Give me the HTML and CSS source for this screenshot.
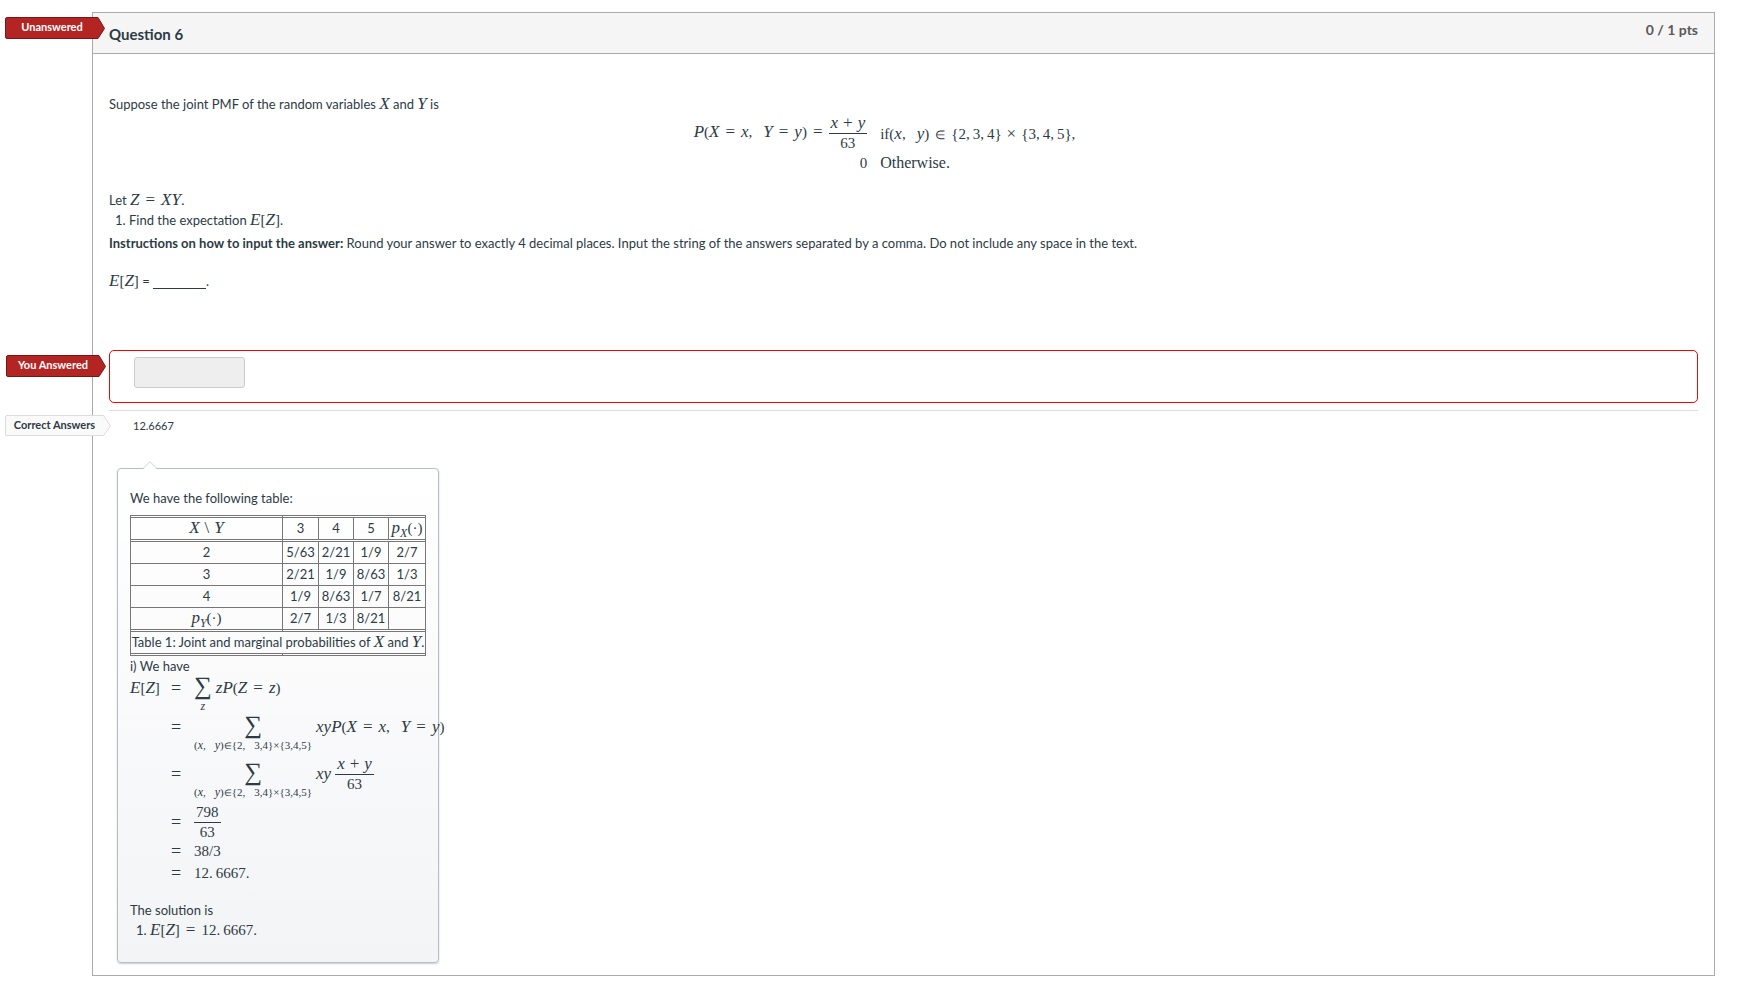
FILE: index.html
```html
<!DOCTYPE html>
<html lang="en">
<head>
<meta charset="utf-8">
<title>Question 6</title>
<link rel="stylesheet" href="styles.css">
</head>
<body>
<main class="question">
  <header class="question-header">
    <div class="ribbon ribbon-header">
      <svg class="ribbon-shape" width="102" height="23" viewBox="0 0 102 23"><path d="M2 .5H93L99.500 11.500L93 21.500H2Q.5 21.500 .5 20V2Q.5 .5 2 .5Z" fill="#b32523" stroke="#7d1413"/></svg>
      <span class="ribbon-text">Unanswered</span>
    </div>
    <h2 class="title">Question 6</h2>
    <span class="points">0 / 1 pts</span>
  </header>

  <section class="question-text">
    <p class="line">Suppose the joint PMF of the random variables <span class="math"><i>X</i></span> and <span class="math"><i>Y</i></span> is</p>
    <div class="pmf math">
      <div class="pmf-value"><i>P</i>(<i>X</i><span class="rel">=</span><i>x</i>,<span class="quad"></span><i>Y</i><span class="rel">=</span><i>y</i>)<span class="rel">=</span><span class="frac"><span class="num"><i>x</i><span class="bin">+</span><i>y</i></span><span class="den">63</span></span></div>
      <div>if(<i>x</i>,<span class="quad"></span><i>y</i>)<span class="rel in">∈</span>{2,<span class="thin"></span>3,<span class="thin"></span>4}<span class="bin">×</span>{3,<span class="thin"></span>4,<span class="thin"></span>5},</div>
      <div class="pmf-value">0</div>
      <div class="otherwise">Otherwise.</div>
    </div>
    <p class="line">Let <span class="math"><i>Z</i><span class="rel">=</span><i>XY</i>.</span></p>
    <ol class="list"><li>Find the expectation <span class="math"><i>E</i>[<i>Z</i>]</span>.</li></ol>
    <p class="line instructions"><strong>Instructions on how to input the answer:</strong> Round your answer to exactly 4 decimal places. Input the string of the answers separated by a comma. Do not include any space in the text.</p>
    <p class="line"><span class="math"><i>E</i>[<i>Z</i>]</span> = <span class="blank"></span>.</p>
  </section>

  <section class="answers">
    <div class="given">
      <div class="ribbon ribbon-given">
        <svg class="ribbon-shape" width="102" height="23" viewBox="0 0 102 23"><path d="M2 .5H93L99.500 11.500L93 21.500H2Q.5 21.500 .5 20V2Q.5 .5 2 .5Z" fill="#b32523" stroke="#7d1413"/></svg>
        <span class="ribbon-text">You Answered</span>
      </div>
      <input class="given-input" type="text" aria-label="Your answer" disabled>
    </div>
    <div class="correct">
      <div class="ribbon ribbon-correct">
        <svg class="ribbon-shape" width="107" height="22" viewBox="0 0 107 22"><path d="M2 .5H98.500L105.500 11L98.500 20.500H2Q.5 20.500 .5 19V2Q.5 .5 2 .5Z" fill="#fafafa" stroke="#dcdcdc"/></svg>
        <span class="ribbon-text">Correct Answers</span>
      </div>
      12.6667
    </div>
  </section>

  <section class="comment">
    <svg class="comment-arrow" width="16" height="9" viewBox="0 0 16 9"><path d="M1 8.500L8 1L15 8.500V9H1Z" fill="#fff"/><path d="M.5 8L8 .7L15.500 8" fill="none" stroke="#ccd3da"/></svg>
    <p class="line">We have the following table:</p>
    <table class="probabilities">
      <colgroup><col><col class="wide"><col class="narrow"><col class="narrow"><col class="last"></colgroup>
      <tbody>
        <tr class="spacer"><td></td><td colspan="4"></td></tr>
        <tr><td><span class="math"><i>X</i><span class="bin">\</span><i>Y</i></span></td><td>3</td><td>4</td><td>5</td><td><span class="math"><i>p</i><sub><i>X</i></sub>(·)</span></td></tr>
        <tr class="spacer"><td></td><td colspan="4"></td></tr>
        <tr><td>2</td><td>5/63</td><td>2/21</td><td>1/9</td><td>2/7</td></tr>
        <tr><td>3</td><td>2/21</td><td>1/9</td><td>8/63</td><td>1/3</td></tr>
        <tr><td>4</td><td>1/9</td><td>8/63</td><td>1/7</td><td>8/21</td></tr>
        <tr><td><span class="math"><i>p</i><sub><i>Y</i></sub>(·)</span></td><td>2/7</td><td>1/3</td><td>8/21</td><td></td></tr>
        <tr class="spacer"><td></td><td colspan="4"></td></tr>
        <tr><td colspan="5">Table 1: Joint and marginal probabilities of <span class="math"><i>X</i></span> and <span class="math"><i>Y</i></span>.</td></tr>
        <tr class="spacer"><td></td><td colspan="4"></td></tr>
      </tbody>
    </table>
    <p class="line">i) We have</p>
    <div class="derivation math">
      <span class="cell"><i>E</i>[<i>Z</i>]</span><span class="cell eq">=</span>
      <div class="rhs"><span class="sum"><span class="sigma">∑</span><span class="under"><i>z</i></span></span><span class="cell"><i>zP</i>(<i>Z</i><span class="rel">=</span><i>z</i>)</span></div>
      <span class="cell eq">=</span>
      <div class="rhs"><span class="sum"><span class="sigma">∑</span><span class="under">(<i>x</i>,<span class="quad"></span><i>y</i>)<span class="in">∈</span>{2,<span class="quad"></span>3,4}×{3,4,5}</span></span><span class="cell"><i>xyP</i>(<i>X</i><span class="rel">=</span><i>x</i>,<span class="quad"></span><i>Y</i><span class="rel">=</span><i>y</i>)</span></div>
      <span class="cell eq">=</span>
      <div class="rhs"><span class="sum"><span class="sigma">∑</span><span class="under">(<i>x</i>,<span class="quad"></span><i>y</i>)<span class="in">∈</span>{2,<span class="quad"></span>3,4}×{3,4,5}</span></span><span class="cell"><i>xy</i></span><span class="frac"><span class="num"><i>x</i><span class="bin">+</span><i>y</i></span><span class="den">63</span></span></div>
      <span class="cell eq">=</span>
      <div class="rhs"><span class="frac"><span class="num">798</span><span class="den">63</span></span></div>
      <span class="short eq">=</span><span class="short">38/3</span>
      <span class="short eq">=</span><span class="short">12.<span class="thin"></span>6667.</span>
    </div>
    <p class="line">The solution is</p>
    <ol class="list"><li><span class="math"><i>E</i>[<i>Z</i>]<span class="rel">=</span>12.<span class="thin"></span>6667.</span></li></ol>
  </section>
</main>
</body>
</html>
```
FILE: styles.css
```css
* {
  box-sizing: border-box;
}

body {
  margin: 0;
  padding: 12px 38px 18px 92px;
  background: #fff;
  color: #2d3b45;
  font: 13px/20px Lato, sans-serif;
}

p,
h2,
ol {
  margin: 0;
}

.question {
  border: 1px solid #aaa;
}

.question-header {
  position: relative;
  display: flex;
  justify-content: space-between;
  height: 41px;
  padding: 7px 16px;
  background: #f5f5f5;
  border-bottom: 1px solid #aaa;
}

.title {
  padding-top: 4px;
  font-size: 15px;
  line-height: 20px;
}

.points {
  color: #595959;
  font-size: 14px;
  font-weight: bold;
}

.ribbon {
  position: absolute;
}

.ribbon-shape {
  display: block;
}

.ribbon-text {
  position: absolute;
  inset: 0;
  padding-right: 8px;
  color: #fff;
  font-size: 11px;
  font-weight: bold;
  line-height: 20px;
  text-align: center;
  white-space: nowrap;
}

.ribbon-header {
  top: 4px;
  left: -88px;
}

.ribbon-given {
  top: 4px;
  left: -104px;
}

.ribbon-correct {
  top: 4px;
  left: -104px;
}

.ribbon-correct .ribbon-text {
  color: #2d3b45;
}

.question-text {
  padding: 40px 54px 0 16px;
}

.math {
  font-family: "Liberation Serif", serif;
  font-size: 15px;
  white-space: nowrap;
}

.math i {
  font-size: 17px;
  line-height: 0;
}

.rel {
  margin: 0 6px;
  font-size: 17px;
  line-height: 0;
}

.bin {
  margin: 0 5px;
  font-size: 17px;
  line-height: 0;
}

.in {
  font-size: 12px;
}

.quad {
  margin-right: 11px;
}

.thin {
  margin-right: 3px;
}

.frac {
  display: inline-flex;
  flex-direction: column;
  vertical-align: middle;
  line-height: 19px;
  text-align: center;
}

.num {
  padding: 0 2px;
  border-bottom: 1px solid #2d3b45;
}

.pmf {
  display: grid;
  grid-template-columns: auto auto;
  column-gap: 13px;
  align-items: center;
  justify-content: center;
  margin-bottom: 17px;
}

.pmf-value {
  text-align: right;
}

.otherwise {
  font-size: 16px;
}

.blank {
  display: inline-block;
  width: 53px;
  height: 1px;
  border-bottom: 1px solid #2d3b45;
  vertical-align: text-bottom;
}

.list {
  padding-left: 20px;
}

.instructions {
  margin: 3px 0 18px;
}

.answers {
  padding: 59px 16px 0;
}

.given {
  position: relative;
  height: 53px;
  padding: 6px 24px;
  border: 1px solid #f00;
  border-radius: 5px;
}

.given-input {
  display: block;
  width: 111px;
  height: 31px;
  background: #eee;
  border: 1px solid #ccc;
  border-radius: 3px;
}

.correct {
  position: relative;
  margin-top: 7px;
  padding: 5px 24px;
  border-top: 1px solid #ddd;
  font-size: 11px;
}

.comment {
  position: relative;
  width: 322px;
  margin: 27px 24px 12px;
  padding: 19px 12px 22px;
  background: linear-gradient(#fff, #f3f4f6);
  border: 1px solid #b4bec8;
  border-radius: 4px;
  box-shadow: 0 1px 2px #ccc;
}

.comment-arrow {
  position: absolute;
  top: -8px;
  left: 24px;
}

.probabilities {
  width: 296px;
  margin-top: 7px;
  border-collapse: collapse;
  table-layout: fixed;
  text-align: center;
}

.probabilities td {
  height: 22px;
  padding: 0;
  border: 1px solid #777;
  line-height: 21px;
  white-space: nowrap;
}

.probabilities .spacer td {
  height: 2px;
}

.wide {
  width: 36px;
}

.narrow {
  width: 35px;
}

.last {
  width: 37px;
}

sub,
.math sub i {
  font-size: 12px;
  line-height: 0;
}

.derivation {
  display: grid;
  grid-template-columns: 41px 23px auto;
  grid-template-rows: 39px 47px 48px 37px 22px 22px;
  align-items: start;
  justify-content: start;
  width: 100%;
  margin: -7px 0 16px;
}

.cell {
  line-height: 38px;
}

.short {
  line-height: 22px;
}

.eq {
  grid-column: 2;
  font-size: 18px;
}

.rhs {
  display: flex;
  gap: 4px;
}

.sum {
  display: flex;
  flex-direction: column;
  align-items: center;
}

.sigma {
  margin-bottom: -4px;
  font-size: 25px;
  line-height: 34px;
}

.under {
  font-size: 11px;
  line-height: 14px;
}

.math .under i {
  font-size: 12px;
}

.under .quad {
  margin-right: 9px;
}

.under .in {
  font-size: 9px;
}
```
